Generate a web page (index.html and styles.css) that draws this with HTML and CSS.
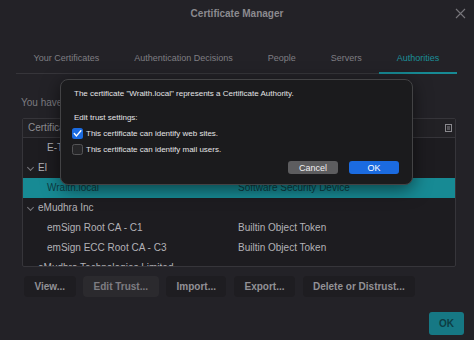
FILE: index.html
```html
<!DOCTYPE html>
<html lang="en">
<head>
    <meta charset="UTF-8">
    <meta name="viewport" content="width=device-width, initial-scale=1.0">
    <title>Certificate Manager</title>
    <link rel="stylesheet" href="styles.css">
</head>
<body>
    <header class="title-bar">
        <span></span>
        <h1 class="window-title">Certificate Manager</h1>
        <svg class="close-btn" width="11" height="11" viewBox="0 0 11 11">
            <path d="M1 1 L10 10 M10 1 L1 10" stroke="#77767b" stroke-width="1.1" fill="none"/>
        </svg>
    </header>

    <nav class="tabs">
        <div class="tab">Your Certificates</div>
        <div class="tab">Authentication Decisions</div>
        <div class="tab">People</div>
        <div class="tab">Servers</div>
        <div class="tab active">Authorities</div>
    </nav>

    <p class="intro">You have certificates on file that identify these certificate authorities</p>

    <div class="cert-table">
        <div class="table-head">
            <span class="col-name">Certificate Name</span>
            <span class="col-device">Security Device</span>
            <svg class="col-picker" width="7" height="8" viewBox="0 0 7 8">
                <rect x="0.5" y="0.5" width="6" height="7" fill="none" stroke="#8a898e"/>
                <path d="M2 3 H5 M2 5 H5" stroke="#8a898e"/>
            </svg>
        </div>
        <div class="row child"><span class="col-name">E-Tugra Certification Authority</span><span class="col-device">Builtin Object Token</span></div>
        <div class="row group"><span class="col-name"><i class="chevron"></i>El</span></div>
        <div class="row child selected"><span class="col-name">Wraith.local</span><span class="col-device">Software Security Device</span></div>
        <div class="row group"><span class="col-name"><i class="chevron"></i>eMudhra Inc</span></div>
        <div class="row child"><span class="col-name">emSign Root CA - C1</span><span class="col-device">Builtin Object Token</span></div>
        <div class="row child"><span class="col-name">emSign ECC Root CA - C3</span><span class="col-device">Builtin Object Token</span></div>
        <div class="row group"><span class="col-name"><i class="chevron"></i>eMudhra Technologies Limited</span></div>
    </div>

    <div class="actions">
        <button class="action-btn">View...</button>
        <button class="action-btn hover">Edit Trust...</button>
        <button class="action-btn">Import...</button>
        <button class="action-btn">Export...</button>
        <button class="action-btn">Delete or Distrust...</button>
    </div>

    <div class="footer">
        <button class="ok-btn">OK</button>
    </div>

    <!-- Edit trust dialog on top of the manager -->
    <div class="dialog">
        <p class="dialog-text">The certificate "Wraith.local" represents a Certificate Authority.</p>
        <p class="dialog-label">Edit trust settings:</p>
        <label class="check-row">
            <span class="checkbox checked">
                <svg width="11" height="11" viewBox="0 0 11 11"><path d="M2.3 5.6 L4.5 7.9 L8.9 2.8" stroke="#fff" stroke-width="1.4" fill="none" stroke-linecap="round" stroke-linejoin="round"/></svg>
            </span>
            This certificate can identify web sites.
        </label>
        <label class="check-row">
            <span class="checkbox"></span>
            This certificate can identify mail users.
        </label>
        <div class="dialog-buttons">
            <button class="dlg-btn cancel">Cancel</button>
            <button class="dlg-btn primary">OK</button>
        </div>
    </div>
</body>
</html>
```

FILE: styles.css
```css
:root {
    --bg: #232227;
    --table-bg: #1d1c20;
    --line: #36353a;
    --text-dim: #7f7e83;
    --text-row: #b3b2b7;
    --teal: #178a94;
    --teal-dark: #0d3d43;
    --blue: #1b6be0;
}

* {
    margin: 0;
    padding: 0;
    box-sizing: border-box;
    font-family: 'Liberation Sans', Arial, sans-serif;
}

body {
    background-color: var(--bg);
    width: 474px;
    height: 340px;
    overflow: hidden;
    position: relative;
}

.title-bar {
    height: 26px;
    display: grid;
    grid-template-columns: 1fr auto 1fr;
    align-items: center;
}

.window-title {
    font-size: 10px;
    font-weight: bold;
    color: #8b8a8f;
}

.close-btn {
    justify-self: end;
    margin-right: 8px;
}

.tabs {
    display: flex;
    width: fit-content;
    margin: 18px 0 0 16px;
    box-shadow: inset 0 -1px 0 var(--line);
}

.tab {
    height: 30px;
    line-height: 28px;
    padding: 0 17.5px;
    font-size: 9px;
    color: var(--text-dim);
    border-bottom: 2px solid transparent;
}

.tab.active {
    color: #1b8f99;
    border-bottom-color: var(--teal);
}

.intro {
    margin: 23px 0 0 21px;
    font-size: 10px;
    line-height: 12px;
    color: #7c7b80;
    white-space: nowrap;
}

.cert-table {
    margin: 9px 0 0 22px;
    width: 434px;
    height: 149px;
    overflow: hidden;
    border: 1px solid var(--line);
    border-radius: 2px;
    background-color: var(--table-bg);
}

.table-head,
.row {
    display: grid;
    grid-template-columns: 215px 1fr;
    font-size: 10px;
    white-space: nowrap;
}

.table-head {
    height: 19px;
    line-height: 18px;
    position: relative;
    background-color: #222125;
    border-bottom: 1px solid var(--line);
    color: #8f8e93;
}

.table-head .col-name {
    padding-left: 5px;
}

.col-picker {
    position: absolute;
    right: 3px;
    top: 5px;
}

.row {
    height: 20px;
    line-height: 20px;
    color: var(--text-row);
}

.row.child .col-name {
    padding-left: 24px;
}

.row.group .col-name {
    padding-left: 5px;
    display: flex;
    align-items: center;
    gap: 4px;
}

.chevron {
    width: 5px;
    height: 5px;
    border-right: 1px solid #7a797e;
    border-bottom: 1px solid #7a797e;
    transform: translateY(-1px) rotate(45deg);
    margin-right: 1px;
}

.row.selected {
    background-color: var(--teal);
    color: var(--teal-dark);
}

.actions {
    display: flex;
    gap: 7.5px;
    margin: 9px 0 0 24px;
}

.action-btn {
    height: 21px;
    padding: 0 10.5px;
    border: none;
    border-radius: 4px;
    background-color: #1e1d21;
    color: #929196;
    font-size: 10px;
    font-weight: bold;
}

.action-btn.hover {
    background-color: #2b2a2e;
    color: #7e7d82;
}

.footer {
    display: flex;
    justify-content: flex-end;
    margin: 15px 10px 0 0;
}

.ok-btn {
    width: 35px;
    height: 23px;
    border: none;
    border-radius: 3px;
    background-color: #167884;
    color: var(--teal-dark);
    font-size: 10px;
    font-weight: bold;
}

.dialog {
    position: absolute;
    left: 60px;
    top: 79px;
    width: 353px;
    height: 106px;
    padding: 9px 13px 0 13px;
    background-color: #1b1b1d;
    border: 1px solid #434345;
    border-radius: 8px;
    box-shadow: 0 4px 18px rgba(0, 0, 0, 0.55);
    color: #e4e4e6;
    font-size: 8px;
}

.dialog-text,
.dialog-label {
    line-height: 10px;
}

.dialog-label {
    margin-top: 14px;
}

.check-row {
    display: flex;
    align-items: center;
    gap: 3px;
    height: 16px;
    margin-left: -2px;
}

.check-row:first-of-type {
    margin-top: 2px;
}

.checkbox {
    width: 11px;
    height: 11px;
    border-radius: 2.5px;
    border: 1px solid #545456;
    background-color: #262628;
    display: flex;
}

.checkbox.checked {
    border: none;
    background-color: var(--blue);
}

.dialog-buttons {
    display: flex;
    justify-content: flex-end;
    gap: 11px;
    margin-top: 4px;
}

.dlg-btn {
    width: 50px;
    height: 13px;
    border: none;
    border-radius: 3px;
    color: #f0f0f0;
    font-size: 9px;
}

.dlg-btn.cancel {
    background-color: #5d5d5f;
}

.dlg-btn.primary {
    background-color: var(--blue);
    color: #fff;
}
```
